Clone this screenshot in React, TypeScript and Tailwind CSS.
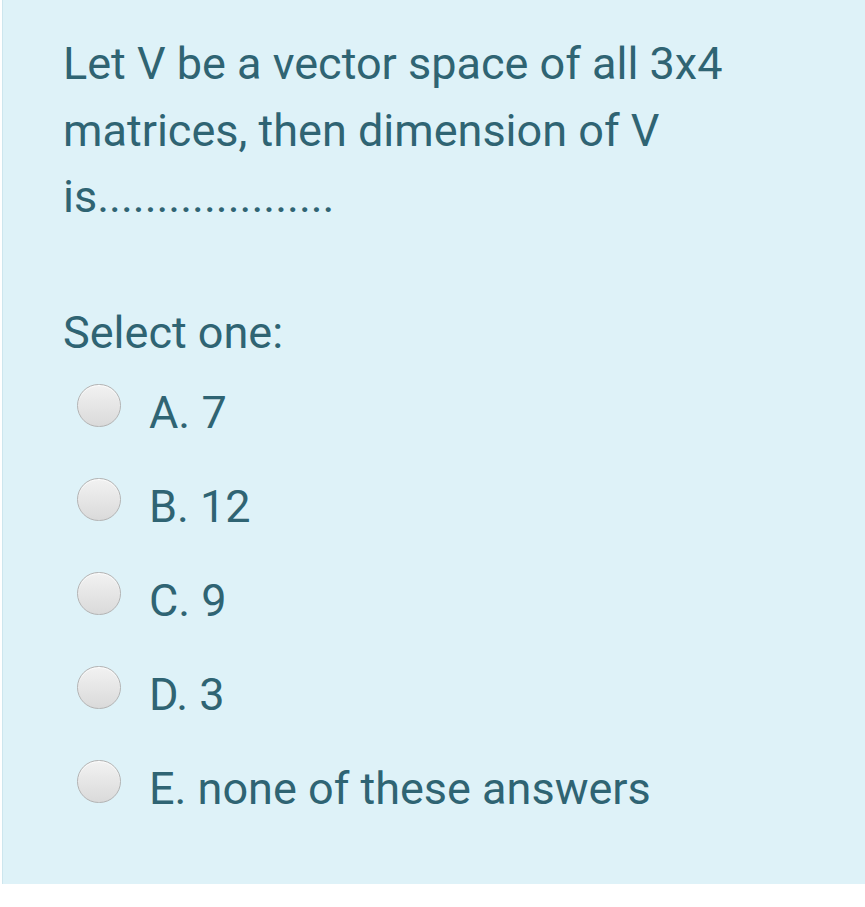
import React from "react";

const options = ["A. 7", "B. 12", "C. 9", "D. 3", "E. none of these answers"];

function Radio() {
  return (
    <span className="block w-[44px] h-[43px] rounded-full border border-[#b3b3b3] bg-gradient-to-b from-[#f2f2f2] to-[#dadada] shadow-[inset_0_1px_1px_rgba(255,255,255,0.8)] shrink-0" />
  );
}

export default function App() {
  return (
    <div className="w-[865px] h-[907px] bg-white" style={{ fontFamily: "Roboto, 'Noto Sans', sans-serif" }}>
      <div className="ml-[2px] w-[863px] h-[884px] bg-[#def2f8] border-l border-[#cde6ee] pl-[60px] pr-[40px] pt-[31px] text-[#2f6473]">
        <p className="text-[45px] leading-[66.5px] m-0">
          Let V be a vector space of all 3x4 matrices, then dimension of V is....................
        </p>
        <p className="text-[45px] leading-[66px] mt-[69px]">Select one:</p>
        <div className="mt-[0px] flex flex-col">
          {options.map((o) => (
            <div key={o} className="flex items-center h-[94px] pl-[14px]">
              <div className="-mt-[14px]">
                <Radio />
              </div>
              <span className="ml-[28px] text-[45px] leading-[66px]">{o}</span>
            </div>
          ))}
        </div>
      </div>
    </div>
  );
}
